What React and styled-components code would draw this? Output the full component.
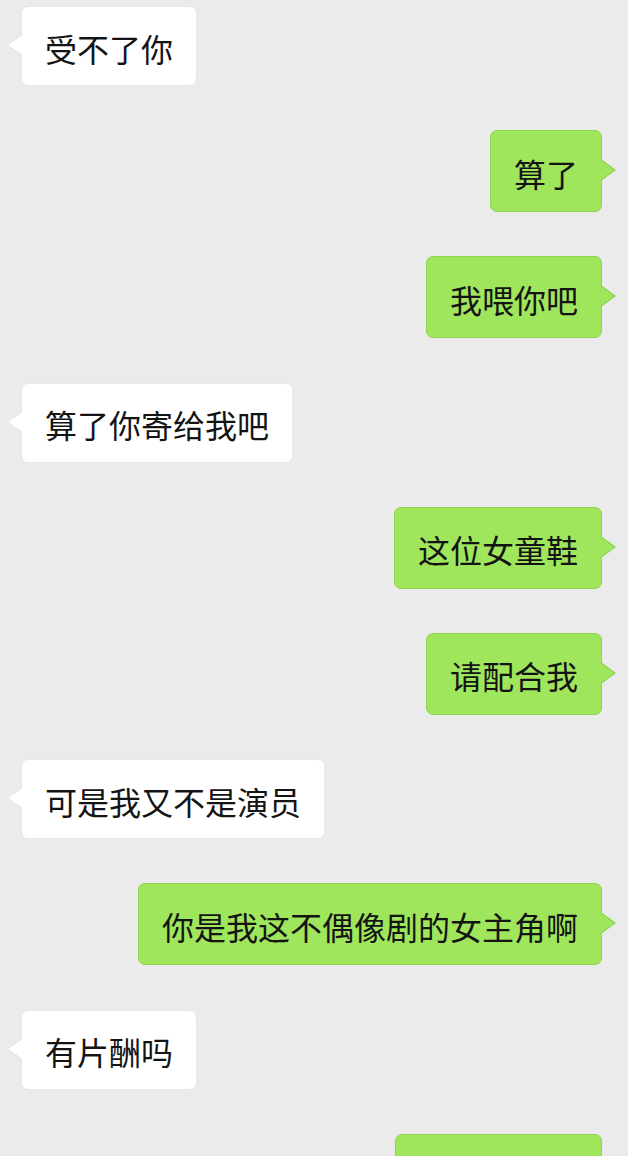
import React from "react";
import styled, { createGlobalStyle } from "styled-components";

const GlobalStyle = createGlobalStyle`
  html, body {
    margin: 0;
    padding: 0;
    background: #ebebeb;
  }
  body {
    font-family: "Noto Sans CJK SC", "Noto Sans", sans-serif;
  }
`;

const ChatList = styled.div`
  width: 628px;
  height: 1156px;
  overflow: hidden;
  box-sizing: border-box;
  padding: 6px 26px 0 21px;
  display: flex;
  flex-direction: column;
  gap: 44.2px;
  background: #ebebeb;
`;

const Row = styled.div`
  display: flex;
  justify-content: ${(p) => (p.$mine ? "flex-end" : "flex-start")};
`;

const Bubble = styled.div`
  position: relative;
  box-sizing: border-box;
  height: ${(p) => (p.$mine ? "82px" : "80px")};
  min-width: ${(p) => p.$width || "0"};
  padding: 3px 23px 0;
  display: flex;
  align-items: center;
  border-radius: 7px;
  font-size: 32px;
  line-height: 1;
  color: #141414;
  white-space: nowrap;
  background: ${(p) => (p.$mine ? "#9fe65c" : "#ffffff")};
  border: 1px solid ${(p) => (p.$mine ? "#8fd350" : "#e7e7e7")};

  &::before {
    content: "";
    position: absolute;
    top: 50%;
    margin-top: -12px;
    border-top: 11px solid transparent;
    border-bottom: 11px solid transparent;
    ${(p) =>
      p.$mine
        ? `right: -15px; border-left: 15px solid #8fd350;`
        : `left: -16px; border-right: 16px solid #e7e7e7;`}
  }

  &::after {
    content: "";
    position: absolute;
    top: 50%;
    margin-top: -11px;
    border-top: 10px solid transparent;
    border-bottom: 10px solid transparent;
    ${(p) =>
      p.$mine
        ? `right: -13px; border-left: 14px solid #9fe65c;`
        : `left: -14px; border-right: 15px solid #ffffff;`}
  }
`;

const messages = [
  { mine: false, text: "受不了你" },
  { mine: true, text: "算了" },
  { mine: true, text: "我喂你吧" },
  { mine: false, text: "算了你寄给我吧" },
  { mine: true, text: "这位女童鞋" },
  { mine: true, text: "请配合我" },
  { mine: false, text: "可是我又不是演员" },
  { mine: true, text: "你是我这不偶像剧的女主角啊" },
  { mine: false, text: "有片酬吗" },
  // only the top edge of this bubble is on screen
  { mine: true, text: "", width: "207px" },
];

export default function App() {
  return (
    <>
      <GlobalStyle />
      <ChatList>
        {messages.map((m, i) => (
          <Row key={i} $mine={m.mine}>
            <Bubble $mine={m.mine} $width={m.width}>
              {m.text}
            </Bubble>
          </Row>
        ))}
      </ChatList>
    </>
  );
}
